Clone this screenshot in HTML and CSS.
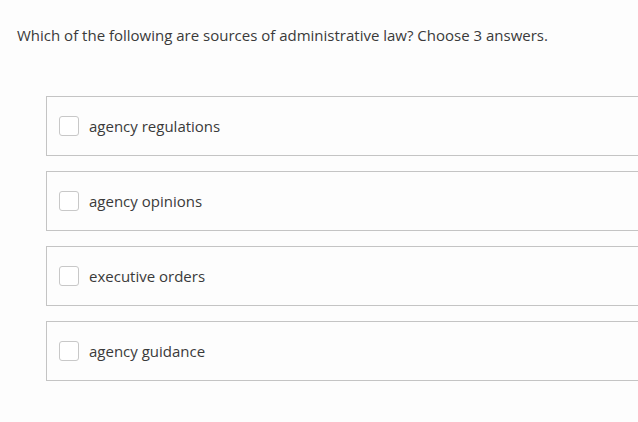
FILE: index.html
```html
<!DOCTYPE html>
<html>
<head>
<meta charset="utf-8">
<link rel="stylesheet" href="styles.css">
</head>
<body>
<div class="page">
  <p class="question">Which of the following are sources of administrative law? Choose 3 answers.</p>
  <div class="options">
    <label class="option"><span class="box"></span><span class="label">agency regulations</span></label>
    <label class="option"><span class="box"></span><span class="label">agency opinions</span></label>
    <label class="option"><span class="box"></span><span class="label">executive orders</span></label>
    <label class="option"><span class="box"></span><span class="label">agency guidance</span></label>
  </div>
</div>
</body>
</html>
```
FILE: styles.css
```css
html, body {
  margin: 0;
  padding: 0;
  background: #fdfdfd;
}
.page {
  font-family: "Open Sans", "Liberation Sans", sans-serif;
  color: #3a3a3a;
  padding: 25px 0 0 17px;
}
.question {
  margin: 0;
  font-size: 15px;
  line-height: 20px;
}
.options {
  margin: 51px 0 0 29px;
  display: flex;
  flex-direction: column;
  gap: 15px;
}
.option {
  height: 58px;
  border: 1px solid #c4c4c4;
  border-right: none;
  display: flex;
  align-items: center;
  padding-left: 12px;
}
.box {
  width: 18px;
  height: 18px;
  border: 1px solid #c8c8c8;
  border-radius: 3px;
  background: #fff;
  flex: none;
}
.label {
  margin-left: 10px;
  font-size: 15px;
  line-height: 20px;
}
```
